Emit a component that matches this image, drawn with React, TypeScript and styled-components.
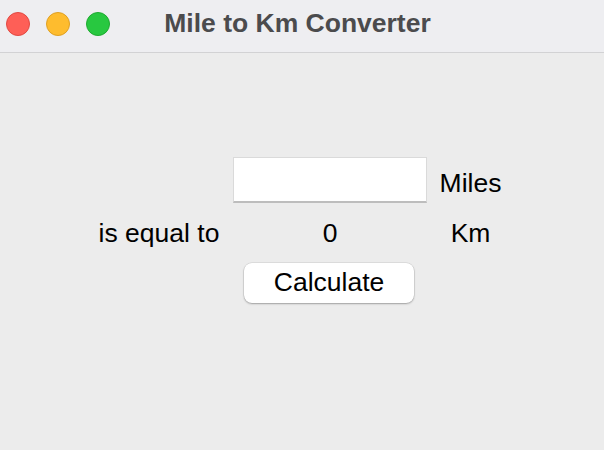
import React from "react";
import styled, { createGlobalStyle } from "styled-components";

const Global = createGlobalStyle`
  html, body { margin: 0; padding: 0; background: #ececec; }
  body { font-family: "Liberation Sans", Arial, sans-serif; }
`;

const Window = styled.div`
  width: 604px;
  height: 450px;
  display: flex;
  flex-direction: column;
  background: #ececec;
  overflow: hidden;
`;

const TitleBar = styled.div`
  height: 52px;
  flex: none;
  display: flex;
  align-items: center;
  background: #eeeef1;
  border-bottom: 1px solid #d2d2d4;
  padding-left: 6px;
`;

const Lights = styled.div`
  display: flex;
  gap: 16px;
  width: 104px;
  flex: none;
`;

const Light = styled.span<{ $fill: string; $edge: string }>`
  width: 24px;
  height: 24px;
  border-radius: 50%;
  box-sizing: border-box;
  background: ${(p) => p.$fill};
  border: 1px solid ${(p) => p.$edge};
  margin-top: -5px;
`;

const Title = styled.div`
  flex: 1;
  text-align: center;
  font-family: "Liberation Sans", Arial, sans-serif;
  font-weight: 700;
  font-size: 26.5px;
  line-height: 30px;
  color: #4b4b4d;
  margin-top: -6px;
  padding-right: 119px;
`;

const Content = styled.div`
  flex: 1;
  display: grid;
  grid-template-columns: 122px 194px 61px;
  grid-template-rows: 46px 30px 40px;
  column-gap: 13px;
  row-gap: 15px;
  padding: 104px 0 0 98px;
  align-content: start;
  justify-items: center;
`;

const Label = styled.div<{ $shift?: number }>`
  font-size: 26.5px;
  line-height: 30px;
  color: #000;
  white-space: nowrap;
  align-self: center;
  margin-top: ${(p) => p.$shift ?? 0}px;
`;

const Entry = styled.input`
  width: 194px;
  height: 46px;
  box-sizing: border-box;
  background: #fff;
  border: 1px solid #dadada;
  border-bottom: 2px solid #bdbdbd;
  outline: none;
  font-size: 26px;
  font-family: inherit;
  padding: 0 6px;
`;

const Button = styled.button`
  grid-column: 2;
  width: 170px;
  height: 40px;
  margin-left: -2px;
  box-sizing: border-box;
  background: #fff;
  border: none;
  border-radius: 8px;
  box-shadow: 0 0 0 0.5px rgba(0, 0, 0, 0.12), 0 1px 2px rgba(0, 0, 0, 0.28);
  font-family: "Liberation Sans", Arial, sans-serif;
  font-size: 26.5px;
  line-height: 30px;
  color: #000;
  padding: 0 0 2px;
`;

export default function App() {
  return (
    <>
      <Global />
      <Window>
        <TitleBar>
          <Lights>
            <Light $fill="#fe5f57" $edge="#e14942" />
            <Light $fill="#febc2e" $edge="#dfa023" />
            <Light $fill="#28c840" $edge="#1eaa30" />
          </Lights>
          <Title>Mile to Km Converter</Title>
        </TitleBar>
        <Content>
          <span />
          <Entry type="text" defaultValue="" />
          <Label $shift={6}>Miles</Label>
          <Label>is equal to</Label>
          <Label>0</Label>
          <Label>Km</Label>
          <Button>Calculate</Button>
        </Content>
      </Window>
    </>
  );
}
